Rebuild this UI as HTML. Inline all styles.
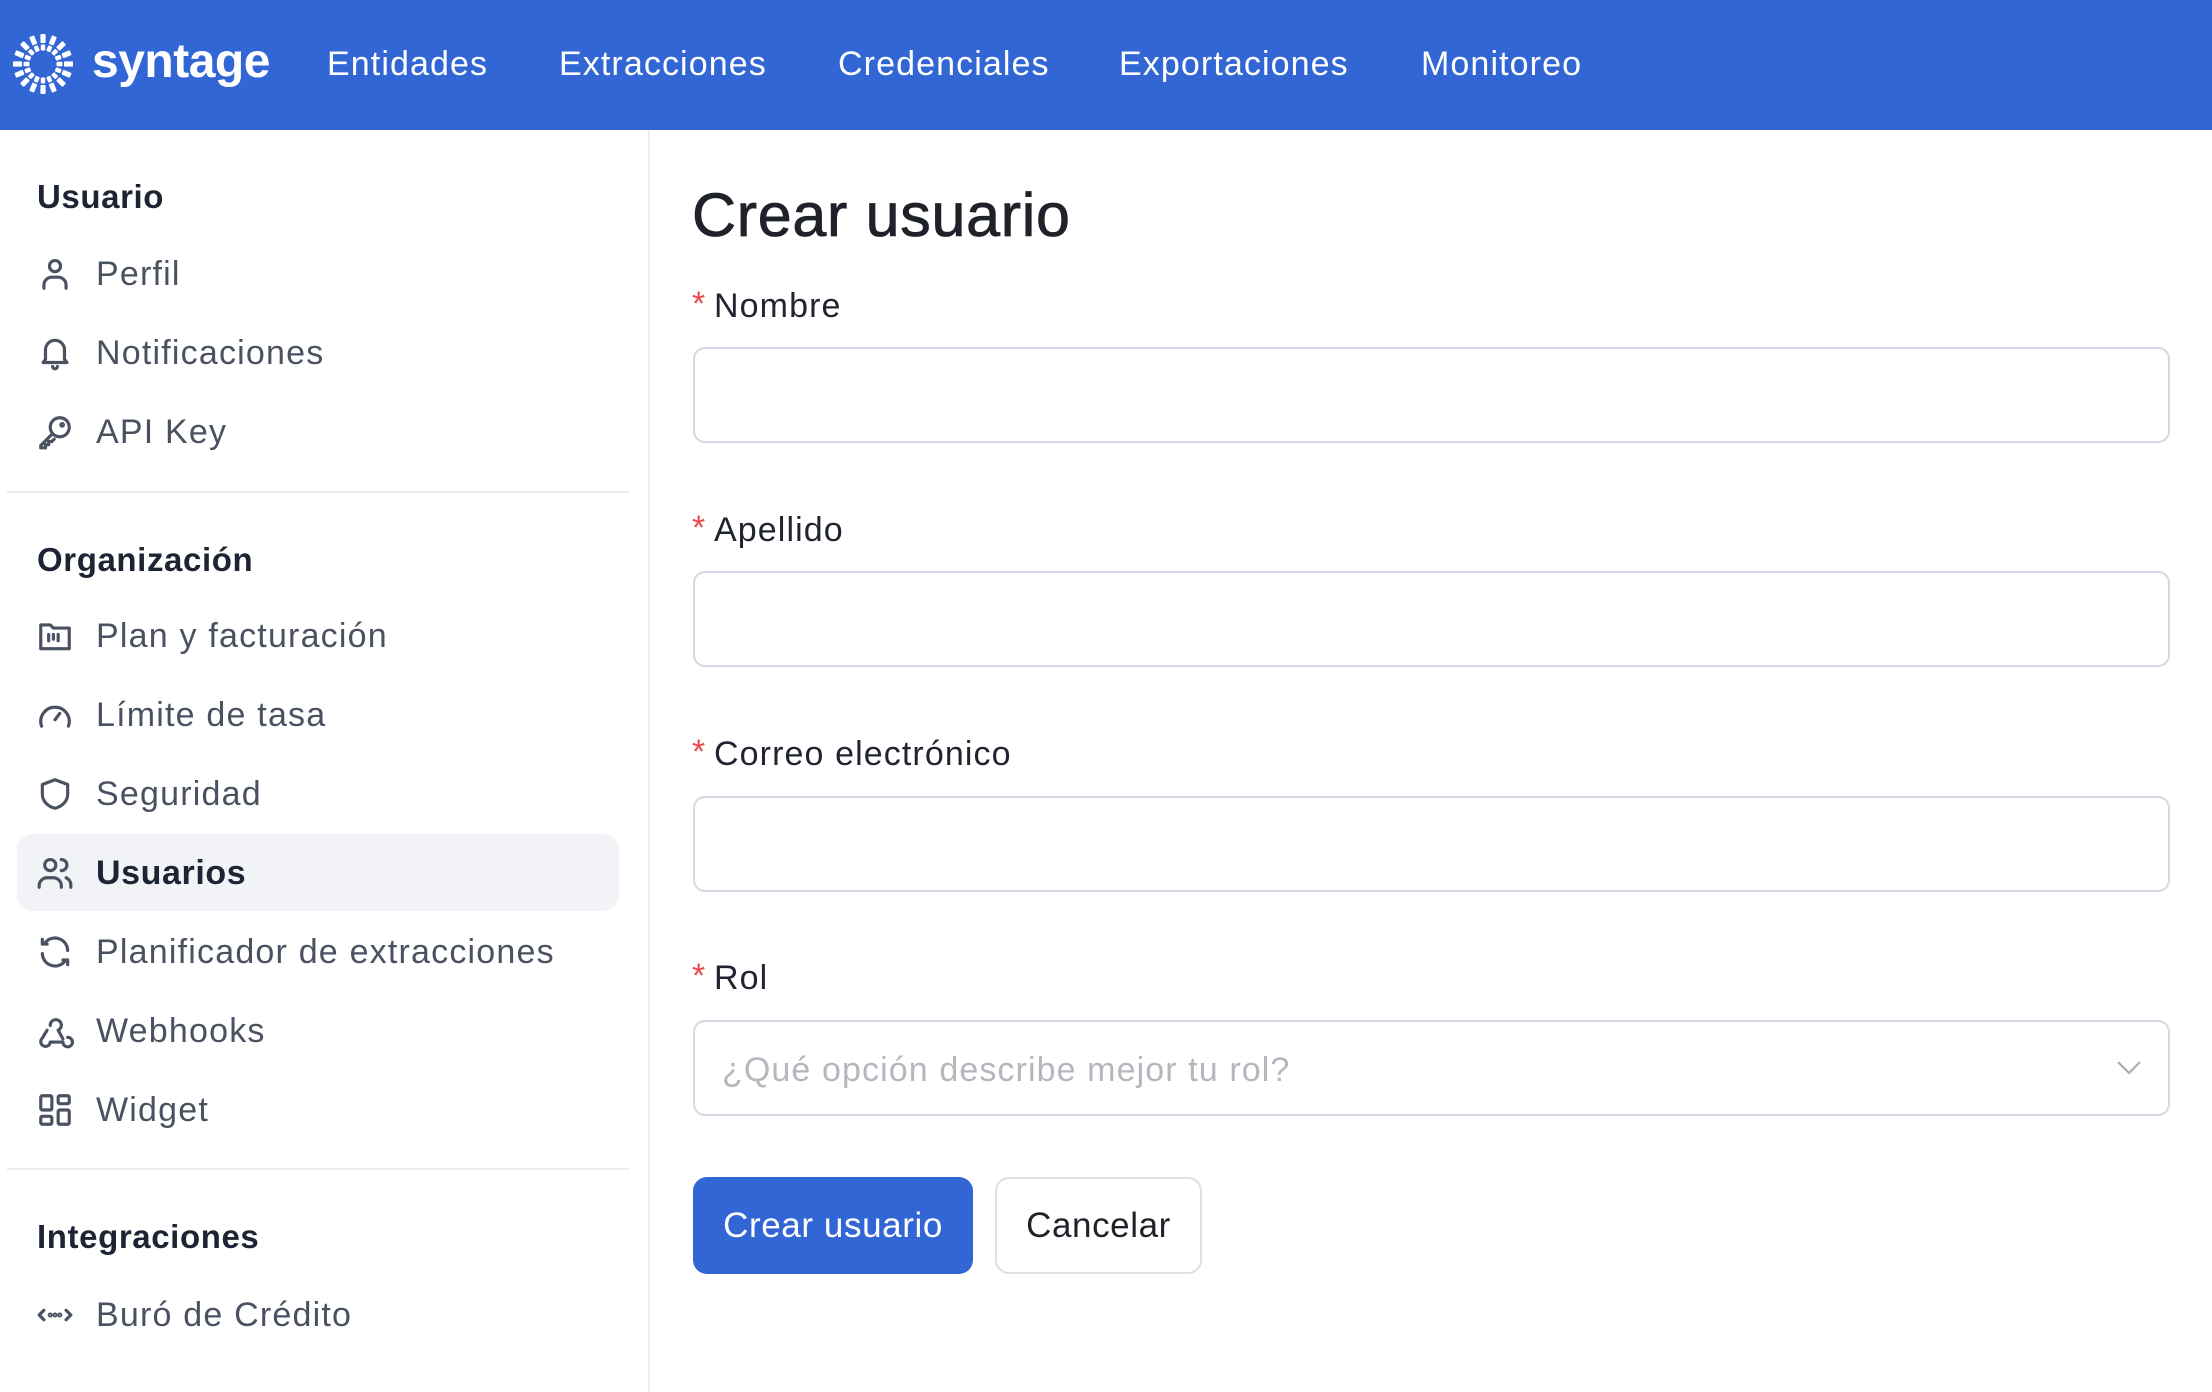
<!DOCTYPE html>
<html><head><meta charset="utf-8"><style>
*{margin:0;padding:0;box-sizing:border-box}
body{width:2212px;height:1392px;background:#fff;font-family:"Liberation Sans",sans-serif;position:relative;overflow:hidden;color:#1f2937}
.hdr{position:absolute;left:0;top:0;width:2212px;height:130px;background:#3166d4}
.nav{position:absolute;top:44px;color:#fff;font-size:34px;line-height:40px;letter-spacing:1.1px}
.logo{position:absolute;left:92px;top:32px;color:#fff;font-size:48px;font-weight:bold;letter-spacing:-0.5px;line-height:60px}
.side{position:absolute;left:0;top:130px;width:650px;height:1262px;border-right:2px solid #eceef1}
.h{position:absolute;left:37px;font-size:33px;font-weight:bold;color:#1d2433;line-height:40px;letter-spacing:.6px}
.it{position:absolute;left:96px;font-size:34px;color:#4a5262;line-height:40px;letter-spacing:1.2px}
.ic{position:absolute;left:36px;width:38px;height:38px}
.div{position:absolute;left:7px;width:622px;height:2px;background:#e9ebee}
.act{position:absolute;left:17px;top:834px;width:602px;height:77px;background:#f1f3f6;border-radius:16px}
.lbl{position:absolute;left:714px;font-size:34px;color:#1f2430;line-height:40px;letter-spacing:1.1px}
.st{position:absolute;left:692px;color:#e5484d;font-size:34px;line-height:34px}
.inp{position:absolute;left:693px;width:1477px;height:96px;border:2px solid #d3d8e2;border-radius:12px}
svg.i{fill:none;stroke:#4a5262;stroke-width:2;stroke-linecap:round;stroke-linejoin:round}
</style></head><body>
<div class="hdr">
<svg style="position:absolute;left:12px;top:33px" width="62" height="62" viewBox="-31 -31 62 62">
<g fill="#fff">
<g id="r"><rect x="-2.6" y="-30" width="5.2" height="9" rx="1"/><rect x="-2.2" y="-19.5" width="4.4" height="6" rx="1"/></g>
<use href="#r" transform="rotate(22.5)"/><use href="#r" transform="rotate(45)"/><use href="#r" transform="rotate(67.5)"/>
<use href="#r" transform="rotate(90)"/><use href="#r" transform="rotate(112.5)"/><use href="#r" transform="rotate(135)"/>
<use href="#r" transform="rotate(157.5)"/><use href="#r" transform="rotate(180)"/><use href="#r" transform="rotate(202.5)"/>
<use href="#r" transform="rotate(225)"/><use href="#r" transform="rotate(247.5)"/><use href="#r" transform="rotate(270)"/>
<use href="#r" transform="rotate(292.5)"/><use href="#r" transform="rotate(315)"/><use href="#r" transform="rotate(337.5)"/>
</g></svg>
<div class="logo">syntage</div>
<div class="nav" style="left:327px">Entidades</div>
<div class="nav" style="left:559px">Extracciones</div>
<div class="nav" style="left:838px">Credenciales</div>
<div class="nav" style="left:1119px">Exportaciones</div>
<div class="nav" style="left:1421px">Monitoreo</div>
</div>

<div class="side"></div>
<div class="act"></div>
<div class="h" style="top:177px">Usuario</div>
<svg class="i ic" style="top:255px" viewBox="0 0 24 24"><circle cx="12" cy="7" r="3.5"/><path d="M5 21v-2a5 5 0 0 1 5-5h4a5 5 0 0 1 5 5v2"/></svg>
<div class="it" style="top:254px">Perfil</div>
<svg class="i ic" style="top:334px" viewBox="0 0 24 24"><path d="M6 16V10a6 6 0 0 1 12 0v6l1.5 2h-15L6 16z"/><path d="M10.5 20.5a1.5 1.5 0 0 0 3 0"/></svg>
<div class="it" style="top:333px">Notificaciones</div>
<svg class="i ic" style="top:413px" viewBox="0 0 24 24"><circle cx="15" cy="9" r="6"/><path d="M10.5 13 3 20.5V22h3v-2h2v-2h2l1.5-1.5"/><circle cx="16.5" cy="7.5" r=".8"/></svg>
<div class="it" style="top:412px">API Key</div>
<div class="div" style="top:491px"></div>
<div class="h" style="top:540px">Organización</div>
<svg class="i ic" style="top:617px" viewBox="0 0 24 24"><path d="M3 5h6l2 2h10v13H3z"/><path d="M8 11v4M11 11v3M14 11v4"/></svg>
<div class="it" style="top:616px">Plan y facturación</div>
<svg class="i ic" style="top:696px" viewBox="0 0 24 24"><path d="M3.5 19a9 9 0 1 1 17 0"/><path d="M12 15l3-4"/></svg>
<div class="it" style="top:695px">Límite de tasa</div>
<svg class="i ic" style="top:775px" viewBox="0 0 24 24"><path d="M12 3 4 6v6c0 5 4 8 8 9 4-1 8-4 8-9V6z"/></svg>
<div class="it" style="top:774px">Seguridad</div>
<svg class="i ic" style="top:854px" viewBox="0 0 24 24"><circle cx="9" cy="7" r="3.5"/><path d="M2 21v-1a5 5 0 0 1 5-5h4a5 5 0 0 1 5 5v1M16 3.5a3.5 3.5 0 0 1 0 7M19 15a5 5 0 0 1 3 5v1"/></svg>
<div class="it" style="top:853px;color:#1d2433;font-weight:bold;letter-spacing:.6px">Usuarios</div>
<svg class="i ic" style="top:933px" viewBox="0 0 24 24"><path d="M20 11a8 8 0 0 0-14.5-4.5M4 4v3h3M4 13a8 8 0 0 0 14.5 4.5M20 20v-3h-3"/></svg>
<div class="it" style="top:932px">Planificador de extracciones</div>
<svg class="i ic" style="top:1012px" viewBox="0 0 24 24"><path d="M9 8.5a3.5 3.5 0 1 1 5 3L17 17M7 11.5 4 16.5a3 3 0 1 0 5 2.5h8a3 3 0 1 0 3-3"/></svg>
<div class="it" style="top:1011px">Webhooks</div>
<svg class="i ic" style="top:1091px" viewBox="0 0 24 24"><rect x="3" y="3" width="7" height="9" rx="1"/><rect x="14" y="3" width="7" height="5" rx="1"/><rect x="3" y="16" width="7" height="5" rx="1"/><rect x="14" y="12" width="7" height="9" rx="1"/></svg>
<div class="it" style="top:1090px">Widget</div>
<div class="div" style="top:1168px"></div>
<div class="h" style="top:1217px">Integraciones</div>
<svg class="i ic" style="top:1296px" viewBox="0 0 24 24"><path d="M5 9l-3 3 3 3M19 9l3 3-3 3"/><circle cx="9" cy="12" r=".6"/><circle cx="12" cy="12" r=".6"/><circle cx="15" cy="12" r=".6"/></svg>
<div class="it" style="top:1295px">Buró de Crédito</div>

<div style="position:absolute;left:692px;top:180px;font-size:61px;line-height:70px;color:#1f2329;-webkit-text-stroke:.8px #1f2329;letter-spacing:.7px">Crear usuario</div>

<div class="st" style="top:287px">*</div><div class="lbl" style="top:286px">Nombre</div>
<div class="inp" style="top:347px"></div>
<div class="st" style="top:511px">*</div><div class="lbl" style="top:510px">Apellido</div>
<div class="inp" style="top:571px"></div>
<div class="st" style="top:735px">*</div><div class="lbl" style="top:734px">Correo electrónico</div>
<div class="inp" style="top:796px"></div>
<div class="st" style="top:959px">*</div><div class="lbl" style="top:958px">Rol</div>
<div class="inp" style="top:1020px"></div>
<div style="position:absolute;left:722px;top:1050px;font-size:34px;line-height:40px;color:#b4b7bd;letter-spacing:1.1px">¿Qué opción describe mejor tu rol?</div>
<svg style="position:absolute;left:2115px;top:1058px" width="28" height="20" viewBox="0 0 28 20"><path d="M3 4l11 11L25 4" fill="none" stroke="#a9adb4" stroke-width="2.2"/></svg>

<div style="position:absolute;left:693px;top:1177px;width:280px;height:97px;background:#3166d4;border-radius:14px;color:#fff;font-size:35px;line-height:97px;text-align:center;letter-spacing:.6px">Crear usuario</div>
<div style="position:absolute;left:995px;top:1177px;width:207px;height:97px;border:2px solid #dcdfe4;border-radius:14px;color:#1f2329;font-size:35px;line-height:93px;text-align:center;letter-spacing:.6px">Cancelar</div>
</body></html>
